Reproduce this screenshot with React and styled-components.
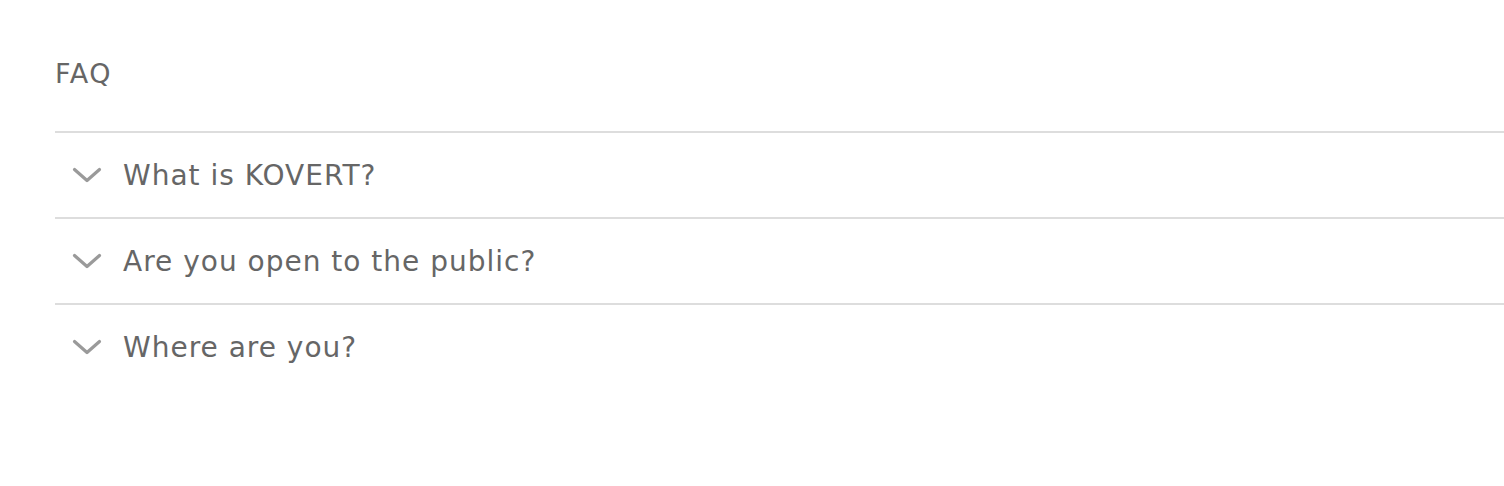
import React from 'react';
import styled, { createGlobalStyle } from 'styled-components';

const GlobalStyle = createGlobalStyle`
  html, body { margin: 0; padding: 0; background: #fff; }
  body { font-family: "DejaVu Sans", "Liberation Sans", sans-serif; overflow: hidden; }
`;

const questions = ['What is KOVERT?', 'Are you open to the public?', 'Where are you?'];

const Chevron = () => (
  <svg width="30" height="16" viewBox="0 0 30 16" fill="none">
    <path d="M2.5 2.5 L15 13.5 L27.5 2.5" stroke="#9a9a9a" strokeWidth="3.2" strokeLinecap="round" strokeLinejoin="round" />
  </svg>
);

const App = () => (
  <>
    <GlobalStyle />
    <Section>
      <Title>FAQ</Title>
      <List>
        {questions.map((q) => (
          <Item key={q}>
            <Chevron />
            <Question>{q}</Question>
          </Item>
        ))}
      </List>
    </Section>
  </>
);

const Section = styled.section`
  padding: 56px 0 0 55px;
`;

const Title = styled.h2`
  margin: 0;
  height: 75px;
  font-size: 27px;
  font-weight: 400;
  color: #666;
  line-height: 36px;
  letter-spacing: 1.6px;
`;

const List = styled.div`
  border-top: 2px solid #dddddd;
`;

const Item = styled.div`
  display: flex;
  align-items: center;
  gap: 21px;
  height: 84px;
  padding-left: 17px;
  border-bottom: 2px solid #dddddd;

  &:last-child { border-bottom: none; }
`;

const Question = styled.span`
  font-size: 28px;
  color: #666;
  letter-spacing: 1px;
`;

export default App;
